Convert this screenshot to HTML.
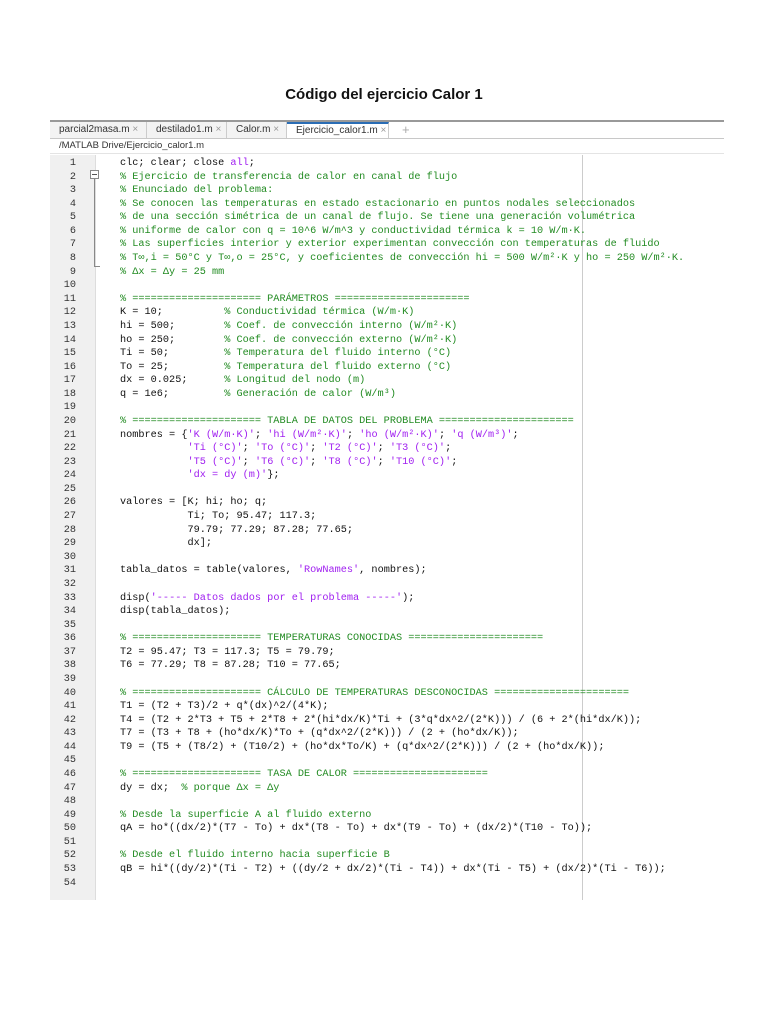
<!DOCTYPE html>
<html><head><meta charset="utf-8"><style>
body{margin:0;width:768px;height:1024px;background:#fff;position:relative;overflow:hidden;font-family:"Liberation Sans",sans-serif}
.title{position:absolute;top:86px;left:0;width:768px;text-align:center;font-weight:bold;font-size:15px;color:#111}
.topline{position:absolute;left:50px;top:120px;width:674px;height:2px;background:#999}
.tabs{position:absolute;left:50px;top:122px;width:674px;height:16px;border-bottom:1px solid #c8c8c8;background:#fff;font-size:10px;color:#333}
.tab{position:absolute;top:0;height:16px;line-height:16px;padding-left:9px;border-right:1px solid #ccc;background:#f3f3f3;white-space:nowrap;box-sizing:border-box}
.tab.act{background:#fff;border-top:2px solid #2a6db5;height:16px;line-height:14px}
.tab i{font-style:normal;color:#999}
.path{position:absolute;left:50px;top:139px;width:674px;height:15px;line-height:14px;font-size:9.5px;color:#333;padding-left:9px;border-bottom:1px solid #e4e4e4;box-sizing:border-box}
.gut{position:absolute;left:50px;top:155px;width:45px;height:745px;background:#f0f0f0;border-right:1px solid #ddd}
.margin{position:absolute;left:582px;top:155px;width:1px;height:745px;background:#ccc}
pre{margin:0;position:absolute;top:157px;font-family:"Liberation Mono",monospace;font-size:10.23px;line-height:13.585px;color:#111}
.num{left:52px;width:24px;text-align:right;color:#333}
.code{left:120px}
.c{color:#228b22}.s{color:#a020f0}.k{color:#0000ff}
.fold{position:absolute;left:90px;top:170px;width:9px;height:9px;border:1px solid #888;background:#fff;box-sizing:border-box}
.fold:after{content:"";position:absolute;left:1px;top:3px;width:5px;height:1px;background:#555}
.vl{position:absolute;left:94px;top:179px;width:1px;height:87px;background:#888}
.vh{position:absolute;left:94px;top:266px;width:6px;height:1px;background:#888}
</style></head><body>
<div class="title">Código del ejercicio Calor 1</div>
<div class="topline"></div>
<div class="tabs">
<div class="tab" style="left:0;width:97px">parcial2masa.m <i>×</i></div>
<div class="tab" style="left:97px;width:80px">destilado1.m <i>×</i></div>
<div class="tab" style="left:177px;width:60px">Calor.m <i>×</i></div>
<div class="tab act" style="left:237px;width:102px">Ejercicio_calor1.m <i>×</i></div>
<div style="position:absolute;left:352px;top:0;color:#aaa;font-size:13px;line-height:15px">+</div>
</div>
<div class="path">/MATLAB Drive/Ejercicio_calor1.m</div>
<div class="gut"></div>
<div class="margin"></div>
<div class="fold"></div><div class="vl"></div><div class="vh"></div>
<pre class="num">1
2
3
4
5
6
7
8
9
10
11
12
13
14
15
16
17
18
19
20
21
22
23
24
25
26
27
28
29
30
31
32
33
34
35
36
37
38
39
40
41
42
43
44
45
46
47
48
49
50
51
52
53
54</pre>
<pre class="code">clc; clear; close <span class="s">all</span>;
<span class="c">% Ejercicio de transferencia de calor en canal de flujo</span>
<span class="c">% Enunciado del problema:</span>
<span class="c">% Se conocen las temperaturas en estado estacionario en puntos nodales seleccionados</span>
<span class="c">% de una sección simétrica de un canal de flujo. Se tiene una generación volumétrica</span>
<span class="c">% uniforme de calor con q = 10^6 W/m^3 y conductividad térmica k = 10 W/m·K.</span>
<span class="c">% Las superficies interior y exterior experimentan convección con temperaturas de fluido</span>
<span class="c">% T∞,i = 50°C y T∞,o = 25°C, y coeficientes de convección hi = 500 W/m²·K y ho = 250 W/m²·K.</span>
<span class="c">% Δx = Δy = 25 mm</span>

<span class="c">% ===================== PARÁMETROS ======================</span>
K = 10;          <span class="c">% Conductividad térmica (W/m·K)</span>
hi = 500;        <span class="c">% Coef. de convección interno (W/m²·K)</span>
ho = 250;        <span class="c">% Coef. de convección externo (W/m²·K)</span>
Ti = 50;         <span class="c">% Temperatura del fluido interno (°C)</span>
To = 25;         <span class="c">% Temperatura del fluido externo (°C)</span>
dx = 0.025;      <span class="c">% Longitud del nodo (m)</span>
q = 1e6;         <span class="c">% Generación de calor (W/m³)</span>

<span class="c">% ===================== TABLA DE DATOS DEL PROBLEMA ======================</span>
nombres = {<span class="s">'K (W/m·K)'</span>; <span class="s">'hi (W/m²·K)'</span>; <span class="s">'ho (W/m²·K)'</span>; <span class="s">'q (W/m³)'</span>;
           <span class="s">'Ti (°C)'</span>; <span class="s">'To (°C)'</span>; <span class="s">'T2 (°C)'</span>; <span class="s">'T3 (°C)'</span>;
           <span class="s">'T5 (°C)'</span>; <span class="s">'T6 (°C)'</span>; <span class="s">'T8 (°C)'</span>; <span class="s">'T10 (°C)'</span>;
           <span class="s">'dx = dy (m)'</span>};

valores = [K; hi; ho; q;
           Ti; To; 95.47; 117.3;
           79.79; 77.29; 87.28; 77.65;
           dx];

tabla_datos = table(valores, <span class="s">'RowNames'</span>, nombres);

disp(<span class="s">'----- Datos dados por el problema -----'</span>);
disp(tabla_datos);

<span class="c">% ===================== TEMPERATURAS CONOCIDAS ======================</span>
T2 = 95.47; T3 = 117.3; T5 = 79.79;
T6 = 77.29; T8 = 87.28; T10 = 77.65;

<span class="c">% ===================== CÁLCULO DE TEMPERATURAS DESCONOCIDAS ======================</span>
T1 = (T2 + T3)/2 + q*(dx)^2/(4*K);
T4 = (T2 + 2*T3 + T5 + 2*T8 + 2*(hi*dx/K)*Ti + (3*q*dx^2/(2*K))) / (6 + 2*(hi*dx/K));
T7 = (T3 + T8 + (ho*dx/K)*To + (q*dx^2/(2*K))) / (2 + (ho*dx/K));
T9 = (T5 + (T8/2) + (T10/2) + (ho*dx*To/K) + (q*dx^2/(2*K))) / (2 + (ho*dx/K));

<span class="c">% ===================== TASA DE CALOR ======================</span>
dy = dx;  <span class="c">% porque Δx = Δy</span>

<span class="c">% Desde la superficie A al fluido externo</span>
qA = ho*((dx/2)*(T7 - To) + dx*(T8 - To) + dx*(T9 - To) + (dx/2)*(T10 - To));

<span class="c">% Desde el fluido interno hacia superficie B</span>
qB = hi*((dy/2)*(Ti - T2) + ((dy/2 + dx/2)*(Ti - T4)) + dx*(Ti - T5) + (dx/2)*(Ti - T6));
</pre>
</body></html>
